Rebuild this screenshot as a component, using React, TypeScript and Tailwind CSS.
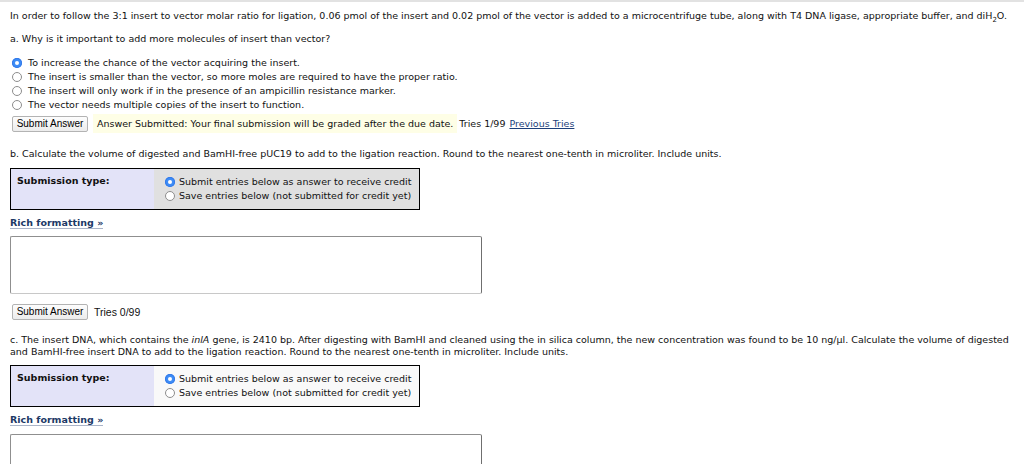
import React from 'react';

const font = "font-['DejaVu_Sans',Verdana,sans-serif]";

const Radio = ({ checked }: { checked?: boolean }) =>
  checked ? (
    <span className="inline-flex h-[10px] w-[10px] shrink-0 items-center justify-center rounded-full bg-[#3d8cf6] shadow-[inset_0_0_0_1px_#3479e8]">
      <span className="h-[4px] w-[4px] rounded-full bg-white" />
    </span>
  ) : (
    <span className="inline-block h-[10px] w-[10px] shrink-0 rounded-full border border-[#8d8d8d] bg-white" />
  );

const SubmitButton = () => (
  <button className="h-[16px] w-[76px] rounded-[2px] border border-[#b3b3b3] bg-gradient-to-b from-[#fdfdfd] to-[#ececec] font-['Liberation_Sans',Arial,sans-serif] text-[10px] leading-[14px] text-black">
    Submit Answer
  </button>
);

const SubmissionBox = ({ rightBg }: { rightBg: string }) => (
  <div className="flex w-[410px] border border-black">
    <div className="w-[143px] bg-[#e3e3f8] px-[6px] pt-[6px] pb-[8px] font-bold">Submission type:</div>
    <div className={`flex flex-1 flex-col gap-[2px] py-[7px] pl-[11px] ${rightBg}`}>
      <label className="flex items-center gap-[4px]">
        <Radio checked />
        <span>Submit entries below as answer to receive credit</span>
      </label>
      <label className="flex items-center gap-[4px]">
        <Radio />
        <span>Save entries below (not submitted for credit yet)</span>
      </label>
    </div>
  </div>
);

const RichFormatting = () => (
  <a className="inline-block border-b border-[#aab4c8] font-bold leading-[11px] text-[#1c3966]">Rich formatting »</a>
);

const AnswerArea = ({ h }: { h: string }) => (
  <div className={`w-[472px] rounded-[2px] border border-[#8f8f8f] border-b-[#c8c8c8] border-r-[#6f6f6f] bg-white ${h}`} />
);

export default function App() {
  return (
    <div className={`${font} h-[464px] w-[1024px] overflow-hidden border-t-2 border-[#e2e2e2] bg-white text-[9.5px] leading-[12px] text-[#111]`}>
      <div className="pl-[10px] pr-[6px] pt-[8px]">
        <p className="whitespace-nowrap">
          In order to follow the 3:1 insert to vector molar ratio for ligation, 0.06 pmol of the insert and 0.02 pmol of the vector is added to a
          microcentrifuge tube, along with T4 DNA ligase, appropriate buffer, and diH
          <span className="relative top-[3px] text-[7px] leading-none">2</span>O.
        </p>

        <p className="mt-[11px]">a. Why is it important to add more molecules of insert than vector?</p>

        <div className="mt-[12px] flex flex-col gap-[2px] pl-[2px]">
          {[
            ['To increase the chance of the vector acquiring the insert.', true],
            ['The insert is smaller than the vector, so more moles are required to have the proper ratio.', false],
            ['The insert will only work if in the presence of an ampicillin resistance marker.', false],
            ['The vector needs multiple copies of the insert to function.', false],
          ].map(([t, c]) => (
            <label key={t as string} className="flex items-center gap-[6px]">
              <Radio checked={c as boolean} />
              <span>{t as string}</span>
            </label>
          ))}
        </div>

        <div className="mt-[3px] flex items-center pl-[2px]">
          <SubmitButton />
          <span className="ml-[5px] flex h-[19px] items-center bg-[#fefee6] px-[4px]">
            Answer Submitted: Your final submission will be graded after the due date.
          </span>
          <span className="ml-[2px]">Tries 1/99</span>
          <a className="ml-[4px] text-[#1c3f7a] underline">Previous Tries</a>
        </div>

        <p className="mt-[15px]">
          b. Calculate the volume of digested and BamHI-free pUC19 to add to the ligation reaction. Round to the nearest one-tenth in microliter. Include units.
        </p>

        <div className="mt-[8px]">
          <SubmissionBox rightBg="bg-[#e0e0e0]" />
        </div>

        <div className="mt-[7px]">
          <RichFormatting />
        </div>

        <div className="mt-[7px]">
          <AnswerArea h="h-[58px]" />
        </div>

        <div className="mt-[10px] flex items-center pl-[2px]">
          <SubmitButton />
          <span className="ml-[6px] font-['Liberation_Sans',Arial,sans-serif] text-[10.5px]">Tries 0/99</span>
        </div>

        <p className="mt-[14px]">
          c. The insert DNA, which contains the <i>inlA</i> gene, is 2410 bp. After digesting with BamHI and cleaned using the in silica column, the new
          concentration was found to be 10 ng/µl. Calculate the volume of digested
          <br />
          and BamHI-free insert DNA to add to the ligation reaction. Round to the nearest one-tenth in microliter. Include units.
        </p>

        <div className="mt-[7px]">
          <SubmissionBox rightBg="bg-[#f9f9f9]" />
        </div>

        <div className="mt-[7px]">
          <RichFormatting />
        </div>

        <div className="mt-[8px]">
          <AnswerArea h="h-[58px]" />
        </div>
      </div>
    </div>
  );
}
